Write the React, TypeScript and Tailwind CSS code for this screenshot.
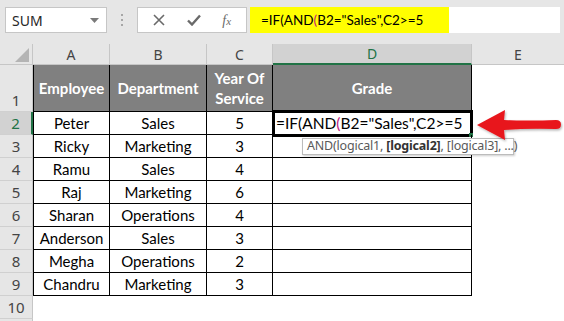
import React from "react";

const cellFont = { fontFamily: "Lato, 'Liberation Sans', sans-serif" };
const uiFont = { fontFamily: "'Noto Sans', 'Open Sans', sans-serif" };

const rows = [
  ["Peter", "Sales", "5"],
  ["Ricky", "Marketing", "3"],
  ["Ramu", "Sales", "4"],
  ["Raj", "Marketing", "6"],
  ["Sharan", "Operations", "4"],
  ["Anderson", "Sales", "3"],
  ["Megha", "Operations", "2"],
  ["Chandru", "Marketing", "3"],
];

const cols = [
  { key: "A", w: "w-[77px]" },
  { key: "B", w: "w-[97px]" },
  { key: "C", w: "w-[66px]" },
  { key: "D", w: "w-[199px]" },
];

function Formula() {
  return (
    <>
      =IF(AND<span className="text-[#c0187f]">(</span>B2="Sales",C2&gt;=5
    </>
  );
}

function TopBar() {
  return (
    <div className="flex h-[44px] items-center bg-[#e6e6e6] pb-[4px]">
      <div
        className="ml-[5px] flex h-[26px] w-[102px] items-center justify-between border border-[#c6c6c6] bg-white pl-[6px] pr-[7px] text-[14px] text-[#262626]"
        style={uiFont}
      >
        <span>SUM</span>
        <svg width="9" height="5" viewBox="0 0 9 5">
          <path d="M0 0h9L4.5 5z" fill="#7a7a7a" />
        </svg>
      </div>
      <div className="flex w-[30px] flex-col items-center gap-[3px]">
        <span className="h-[2px] w-[2px] bg-[#a6a6a6]" />
        <span className="h-[2px] w-[2px] bg-[#a6a6a6]" />
        <span className="h-[2px] w-[2px] bg-[#a6a6a6]" />
      </div>
      <div className="flex h-[26px] w-[110px] items-center justify-around border border-[#c6c6c6] bg-white px-[4px]">
        <svg width="12" height="12" viewBox="0 0 12 12">
          <path d="M1 1l10 10M11 1L1 11" stroke="#6a6a6a" strokeWidth="1.6" />
        </svg>
        <svg width="14" height="12" viewBox="0 0 14 12">
          <path d="M1 6.5l4 4L13 1.5" stroke="#6a6a6a" strokeWidth="2.4" fill="none" />
        </svg>
        <span
          className="text-[14px] italic text-[#6a6a6a]"
          style={{ fontFamily: "'Liberation Serif', serif" }}
        >
          f<span className="text-[11px]">x</span>
        </span>
      </div>
      <div className="ml-[3px] mr-[4px] flex h-[26px] flex-1 bg-white">
        <div
          className="flex w-[199px] items-center whitespace-nowrap bg-[#ffff00] pl-[11px] text-[13.5px] text-black"
          style={cellFont}
        >
          <Formula />
        </div>
      </div>
    </div>
  );
}

function ColumnHeader() {
  return (
    <div className="flex h-[21px] bg-[#e6e6e6] text-[14px] text-[#444]" style={uiFont}>
      <div className="relative w-[33px] border-r border-b border-[#c6c6c6]">
        <svg className="absolute bottom-[2px] right-[3px]" width="14" height="14" viewBox="0 0 14 14">
          <path d="M14 0v14H0z" fill="#b4b4b4" />
        </svg>
      </div>
      {cols.map((c) =>
        c.key === "D" ? (
          <div
            key={c.key}
            className={`${c.w} flex items-center justify-center border-r border-b-2 border-r-[#c6c6c6] border-b-[#217346] bg-[#d2d2d2] text-[#217346]`}
          >
            {c.key}
          </div>
        ) : (
          <div
            key={c.key}
            className={`${c.w} flex items-center justify-center border-r border-b border-[#c6c6c6]`}
          >
            {c.key}
          </div>
        )
      )}
      <div className="flex flex-1 items-center justify-center border-b border-[#c6c6c6]">E</div>
    </div>
  );
}

function RowHead({ n, tall, active }: { n?: number; tall?: boolean; active?: boolean }) {
  return (
    <div
      className={`flex w-[33px] shrink-0 justify-center border-b border-[#d0d0d0] text-[15px] ${
        tall ? "items-end" : "items-center"
      } ${
        active
          ? "border-r-2 border-r-[#217346] bg-[#d2d2d2] text-[#217346]"
          : "border-r border-r-[#c6c6c6] bg-[#e6e6e6] text-[#444]"
      }`}
      style={uiFont}
    >
      {n}
    </div>
  );
}

export default function App() {
  return (
    <div className="relative h-[321px] w-[564px] overflow-hidden bg-white">
      <TopBar />
      <ColumnHeader />

      <div className="flex h-[47px]">
        <RowHead n={1} tall />
        <div
          className="flex text-[15px] font-bold leading-[20px] text-white"
          style={cellFont}
        >
          <div className="flex w-[77px] items-center justify-center border-x border-b border-black bg-[#808080]">
            Employee
          </div>
          <div className="flex w-[97px] items-center justify-center border-r border-b border-black bg-[#808080]">
            Department
          </div>
          <div className="flex w-[66px] flex-col items-center justify-center border-r border-b border-black bg-[#808080]">
            <span>Year Of</span>
            <span>Service</span>
          </div>
          <div className="flex w-[199px] items-center justify-center border-r border-b border-black bg-[#808080]">
            Grade
          </div>
        </div>
      </div>

      {rows.map((r, i) => (
        <div key={i} className="flex h-[23px]">
          <RowHead n={i + 2} active={i === 0} />
          <div className="flex text-[15px] text-black" style={cellFont}>
            <div className="flex w-[77px] items-center justify-center border-x border-b border-black">
              {r[0]}
            </div>
            <div className="flex w-[97px] items-center justify-center border-r border-b border-black">
              {r[1]}
            </div>
            <div className="flex w-[66px] items-center justify-center border-r border-b border-black">
              {r[2]}
            </div>
            <div className="relative flex w-[199px] items-center border-r border-b border-black">
              {i === 0 && (
                <div className="absolute -top-[2px] -bottom-[3px] -left-[1px] -right-[2px] flex items-center whitespace-nowrap border-[3px] border-black bg-white pl-[1px] text-[15.5px]">
                  <Formula />
                  <span className="absolute -bottom-[3px] -right-[3px] h-[4px] w-[4px] bg-[#217346]" />
                </div>
              )}
            </div>
          </div>
        </div>
      ))}

      <div className="flex h-[23px]">
        <RowHead n={10} />
      </div>
      <div className="flex h-[23px]">
        <RowHead />
      </div>

      {/* function argument tooltip */}
      <div
        className="absolute left-[302px] top-[138px] flex h-[17px] w-[212px] items-center whitespace-nowrap border border-[#bcbcbc] bg-white pl-[4px] text-[12.5px] text-[#5a5a5a] shadow-[1px_1px_2px_rgba(0,0,0,0.2)]"
        style={{ fontFamily: "'Noto Sans', sans-serif", letterSpacing: "-0.2px" }}
      >
        AND(logical1,&nbsp;<b className="text-[#333]">[logical2]</b>, [logical3], ...)
      </div>

      {/* red arrow */}
      <svg className="absolute left-[474px] top-[106px]" width="90" height="38" viewBox="0 0 90 38">
        <defs>
          <filter id="sh" x="-10%" y="-20%" width="130%" height="150%">
            <feDropShadow dx="1" dy="1.5" stdDeviation="1" floodColor="#000" floodOpacity="0.3" />
          </filter>
        </defs>
        <path
          d="M3 19 L31 4 L30 14 Q55 15 82 14 Q87 14 87 18.5 Q87 23 82 23 Q55 22 30 24 L31 34 Z"
          fill="#e8161d"
          filter="url(#sh)"
        />
      </svg>
    </div>
  );
}
